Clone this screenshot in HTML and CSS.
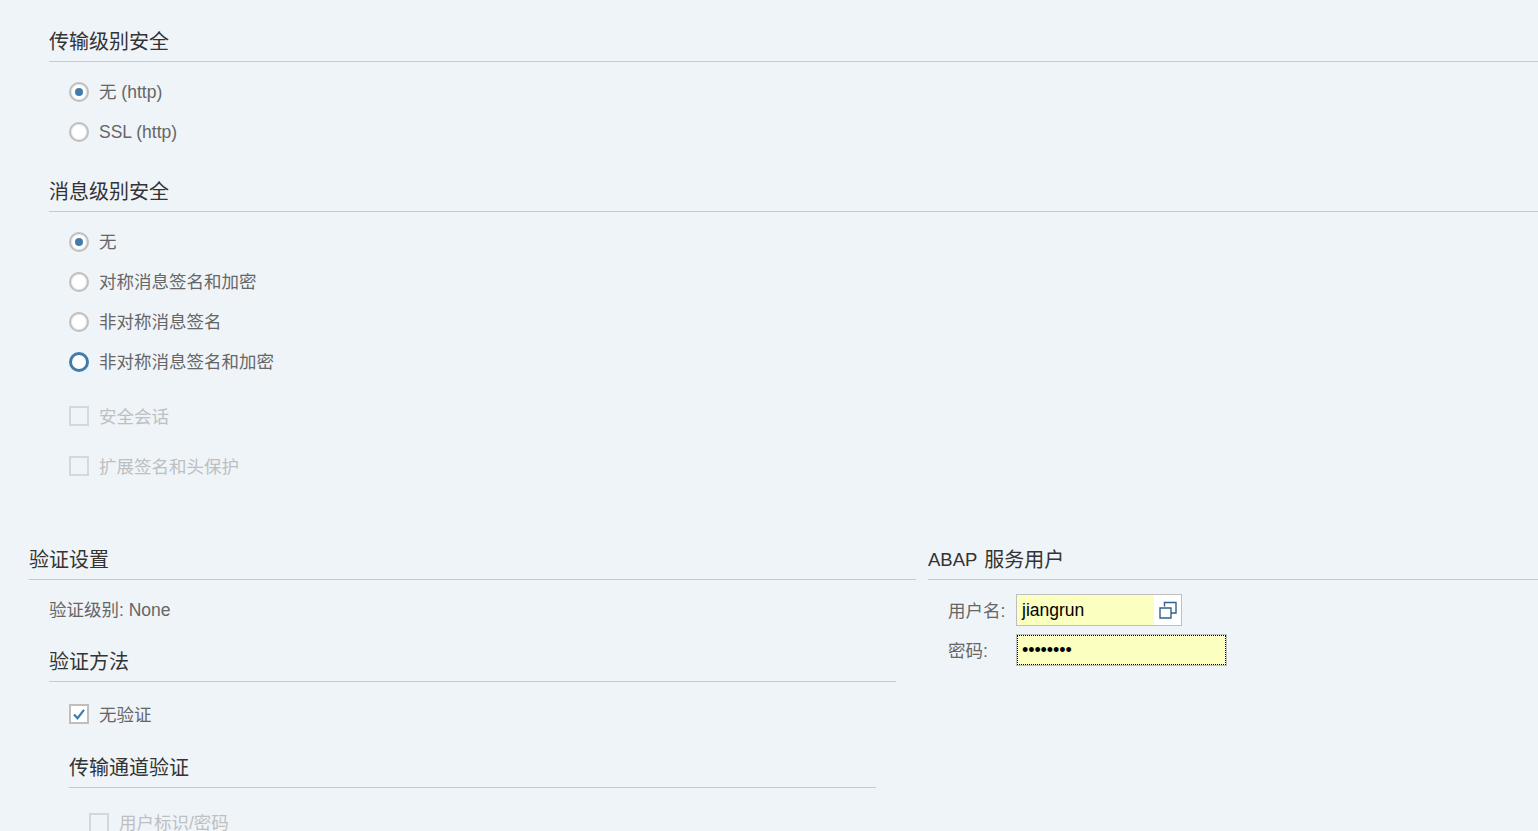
FILE: index.html
```html
<!DOCTYPE html>
<html lang="zh">
<head>
<meta charset="utf-8">
<title>安全设置</title>
<link rel="stylesheet" href="styles.css">
</head>
<body>
<main class="page">
  <section class="upper">
    <h2 class="title title-first">传输级别安全</h2>
    <div class="group">
      <div class="row"><span class="radio on"></span><span class="label">无 (http)</span></div>
      <div class="row"><span class="radio"></span><span class="label">SSL (http)</span></div>
    </div>
    <h2 class="title">消息级别安全</h2>
    <div class="group">
      <div class="row"><span class="radio on"></span><span class="label">无</span></div>
      <div class="row"><span class="radio"></span><span class="label">对称消息签名和加密</span></div>
      <div class="row"><span class="radio"></span><span class="label">非对称消息签名</span></div>
      <div class="row"><span class="radio focus"></span><span class="label">非对称消息签名和加密</span></div>
    </div>
    <div class="group checks">
      <div class="row tall disabled"><span class="check"></span><span class="label low">安全会话</span></div>
      <div class="row tall disabled"><span class="check"></span><span class="label low">扩展签名和头保护</span></div>
    </div>
  </section>
  <section class="columns">
    <div class="col-left">
      <h2 class="title">验证设置</h2>
      <div class="level">验证级别: None</div>
      <div class="method">
        <h2 class="title title-sub">验证方法</h2>
        <div class="group group-tight">
          <div class="row"><span class="check checked"><svg viewBox="0 0 20 20" width="20" height="20"><path d="M5 10.5 L8.5 14.2 L15 5.8" fill="none" stroke="#427cac" stroke-width="2.2"/></svg></span><span class="label low">无验证</span></div>
        </div>
        <div class="transport">
          <h2 class="title title-sub2">传输通道验证</h2>
          <div class="group group-tight2">
            <div class="row disabled"><span class="check"></span><span class="label">用户标识/密码</span></div>
          </div>
        </div>
      </div>
    </div>
    <div class="col-right">
      <h2 class="title"><span class="abap">ABAP</span> <span>服务用户</span></h2>
      <div class="form">
        <div class="field">
          <label class="field-label">用户名:</label>
          <div class="input with-help"><span class="value">jiangrun</span><span class="help"><svg viewBox="0 0 18 18" width="18" height="18"><path d="M5.5 5.5V1.5H17V12H12.5M1 7H12V17H1Z" fill="none" stroke="#346187" stroke-width="1.4"/></svg></span></div>
        </div>
        <div class="field">
          <label class="field-label">密码:</label>
          <div class="input password"><span class="dots">••••••••</span></div>
        </div>
      </div>
    </div>
  </section>
</main>
</body>
</html>
```

FILE: styles.css
```css
* { box-sizing: border-box; }
html, body { margin: 0; height: 831px; overflow: hidden; }
body {
  background: #eff4f9;
  color: #666;
  font-family: "Liberation Sans", "Noto Sans CJK SC", sans-serif;
  font-size: 17.5px;
}
.page { width: 1538px; }
.upper { padding-left: 49px; height: 520px; }
.title {
  margin: 0;
  height: 60px;
  padding-bottom: 7px;
  display: flex;
  align-items: flex-end;
  font-size: 20px;
  font-weight: 400;
  line-height: 24px;
  color: #333;
  border-bottom: 1px solid #c8cbce;
}
.title-first { height: 62px; }
.abap { font-size: 18.5px; margin-right: 7px; }
.group { padding: 10px 0 0 20px; }
.row { display: flex; align-items: center; height: 40px; gap: 10px; }
.row.tall { height: 50px; }
.checks { padding-top: 9px; }
.label { line-height: 24px; white-space: nowrap; }
.label.low { margin-top: 2px; }
.radio {
  width: 20px; height: 20px; border-radius: 50%;
  border: 2px solid #bfbfbf; background: #fff;
  box-shadow: inset 0 0 0 1px rgba(191, 191, 191, .35);
  display: flex; align-items: center; justify-content: center;
  flex: none;
}
.radio.on::after { content: ""; width: 8px; height: 8px; border-radius: 50%; background: #427cac; }
.radio.focus { border: 3px solid #427cac; box-shadow: none; }
.check {
  width: 20px; height: 20px; border: 2px solid #bfbfbf; background: #fff;
  flex: none; position: relative; display: block;
}
.check svg { display: block; margin: -2px; }
.disabled .check { border-color: #d5d8db; background: transparent; }
.disabled .label { color: #bdbfc1; }
.columns { display: flex; gap: 12px; padding-left: 29px; }
.col-left { width: 887px; flex: none; }
.col-right { flex: 1; }
.level { padding-left: 20px; height: 56px; display: flex; align-items: center; }
.method { padding: 0 20px; margin-top: -4px; }
.title-sub { height: 50px; }
.group-tight { padding-top: 12px; }
.group-tight .row { height: 40px; }
.transport { padding: 0 20px; margin-top: -6px; }
.title-sub2 { height: 60px; }
.group-tight2 { padding-top: 15px; }
.form { padding: 14px 0 0 20px; display: flex; flex-direction: column; gap: 8px; }
.field { display: flex; align-items: center; height: 32px; }
.field-label { width: 68px; flex: none; margin-top: -2px; }
.input {
  height: 32px; border: 1px solid #bfbfbf; background: #fbffbf;
  display: flex; align-items: center; color: #000;
}
.with-help { width: 166px; }
.value { flex: 1; padding-left: 5px; }
.help {
  width: 27px; height: 30px; background: #fff; flex: none;
  display: flex; align-items: center; justify-content: center;
}
.password {
  width: 211px; padding-left: 5px;
  outline: 1px dotted #000; outline-offset: -2px;
}
.dots { font-size: 18px; letter-spacing: -.1px; }
```
